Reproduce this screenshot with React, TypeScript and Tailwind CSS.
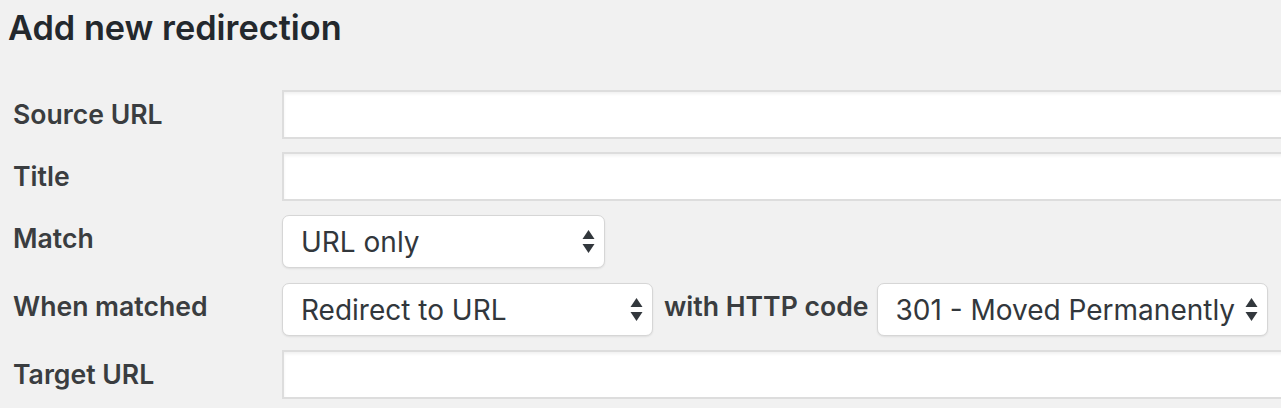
import React from "react";

const font = { fontFamily: 'Inter, "Noto Sans", "Liberation Sans", sans-serif' };

function Arrows() {
  return (
    <svg width="13" height="26" viewBox="0 0 13 26" className="shrink-0">
      <path d="M6.5 1 L12.5 10 L0.5 10 Z" fill="#32373c" />
      <path d="M0.5 15 L12.5 15 L6.5 24 Z" fill="#32373c" />
    </svg>
  );
}

function Select({ value, width }: { value: string; width: string }) {
  return (
    <div
      className={`${width} h-[53px] flex items-center justify-between pl-[18px] pr-[9px] bg-white rounded-[7px] border border-[#d6d6d6] shadow-[0_1px_2px_rgba(0,0,0,0.08)] text-[28px] text-[#32373c] shrink-0`}
    >
      <span className="whitespace-nowrap">{value}</span>
      <Arrows />
    </div>
  );
}

function TextInput() {
  return (
    <div className="w-[1010px] h-[49px] shrink-0 bg-white border-2 border-[#dddddd] shadow-[inset_0_2px_3px_rgba(0,0,0,0.06)]" />
  );
}

function Label({ children, extra = "" }: { children: React.ReactNode; extra?: string }) {
  return (
    <div className={`w-[282px] shrink-0 pl-[13px] text-[26.6px] font-semibold text-[#3a3d40] leading-none ${extra}`}>
      {children}
    </div>
  );
}

export default function App() {
  return (
    <div className="w-[1281px] h-[408px] overflow-hidden bg-[#f1f1f1]" style={font}>
      <h1 className="mt-[8px] pl-[8px] text-[34.3px] leading-[40px] font-semibold text-[#23282d]">
        Add new redirection
      </h1>
      <div className="mt-[42px] flex flex-col">
        <div className="flex items-center">
          <Label>Source URL</Label>
          <TextInput />
        </div>
        <div className="flex items-center mt-[13px]">
          <Label>Title</Label>
          <TextInput />
        </div>
        <div className="flex items-center mt-[14px]">
          <Label extra="pb-[6px]">Match</Label>
          <Select value="URL only" width="w-[323px]" />
        </div>
        <div className="flex items-center mt-[15px]">
          <Label extra="pb-[6px]">When matched</Label>
          <Select value="Redirect to URL" width="w-[371px]" />
          <span className="ml-[11px] mr-[8px] pb-[6px] text-[26.6px] font-semibold text-[#3a3d40] leading-none whitespace-nowrap">
            with HTTP code
          </span>
          <Select value="301 - Moved Permanently" width="w-[391px]" />
        </div>
        <div className="flex items-center mt-[14px]">
          <Label>Target URL</Label>
          <TextInput />
        </div>
      </div>
    </div>
  );
}
